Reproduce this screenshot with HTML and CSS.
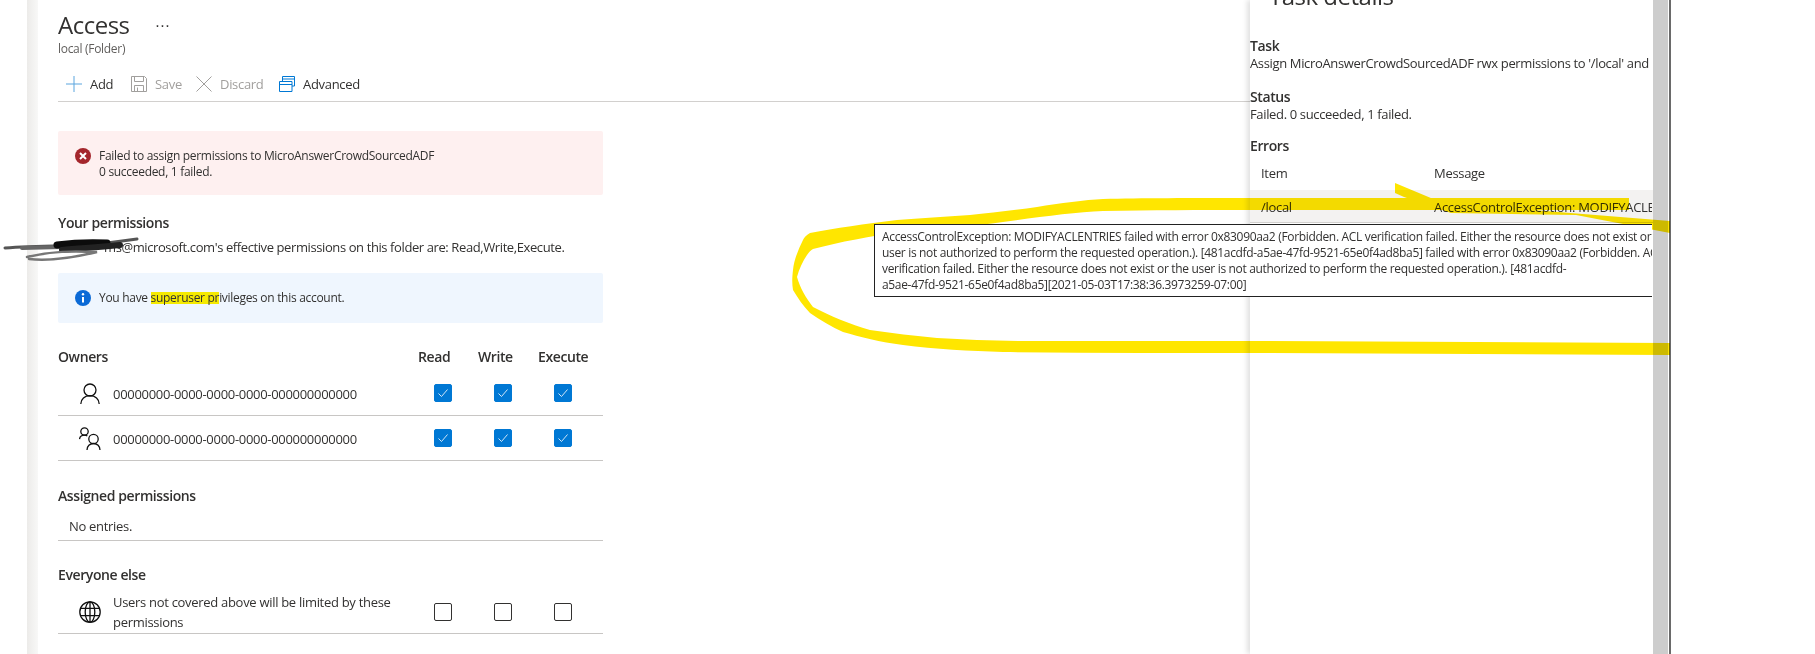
FILE: index.html
```html
<!DOCTYPE html>
<html lang="en">
<head>
  <meta charset="UTF-8" />
  <title>Access</title>
  <link rel="stylesheet" href="styles.css">
</head>
<body>
  <div class="strip"></div>

  <main class="main">
    <div class="title-row">
      <h1>Access</h1>
      <span class="more">&middot;&middot;&middot;</span>
    </div>
    <div class="subtitle">local (Folder)</div>

    <div class="toolbar">
      <button class="tool tool-add">
        <svg viewBox="0 0 16 16" width="16" height="16"><path d="M8 0v16M0 8h16" stroke="#5aa5de" fill="none"/></svg>
        Add
      </button>
      <button class="tool tool-save off">
        <svg viewBox="0 0 16 16" width="16" height="16" fill="none" stroke="#a19f9d"><path d="M.5.5h13l2 2v13H.5zM3.500.5v5h9v-5M3.500 15.500v-6h9v6M6.500 11.500v4"/></svg>
        Save
      </button>
      <button class="tool tool-discard off">
        <svg viewBox="0 0 16 16" width="16" height="16" fill="none" stroke="#a19f9d"><path d="M.5.5l15 15M15.500.5l-15 15"/></svg>
        Discard
      </button>
      <button class="tool tool-advanced">
        <svg viewBox="0 0 16 16" width="16" height="16" fill="none" stroke="#0078d4"><path d="M.5 5.500h12.500v10H.5zM.5 8.500h12.500M3.500 5.500v-5h12v9.500h-2.500M3.500 3h12"/></svg>
        Advanced
      </button>
    </div>

    <div class="content">
      <div class="banner banner-error">
        <svg viewBox="0 0 16 16" width="16" height="16"><circle cx="8" cy="8" r="8" fill="#a4262c"/><path d="M5 5l6 6M11 5l-6 6" stroke="#fff" stroke-width="2"/></svg>
        <div>Failed to assign permissions to MicroAnswerCrowdSourcedADF<br>0 succeeded, 1 failed.</div>
      </div>

      <h2 class="head-yours">Your permissions</h2>
      <div class="effective"><span class="redacted"></span>ms@microsoft.com's effective permissions on this folder are: Read,Write,Execute.</div>

      <div class="banner banner-info">
        <svg viewBox="0 0 16 16" width="16" height="16"><circle cx="8" cy="8" r="8" fill="#0b6ad6"/><path d="M8 7v5.500" stroke="#fff" stroke-width="2"/><circle cx="8" cy="4.300" r="1.200" fill="#fff"/></svg>
        <div>You have <mark>superuser pr</mark>ivileges on this account.</div>
      </div>

      <div class="perm-head">
        <h2>Owners</h2>
        <h2>Read</h2>
        <h2>Write</h2>
        <h2>Execute</h2>
      </div>
      <div class="perm-row">
        <svg class="ico" viewBox="0 0 20 21" width="20" height="21" fill="none" stroke="#111" stroke-width="1.300"><circle cx="10" cy="7" r="6"/><path d="M.8 21c0-5 4-8.300 9.200-8.300s9.200 3.300 9.200 8.300"/></svg>
        <span class="perm-name">00000000-0000-0000-0000-000000000000</span>
        <span class="check on"><svg viewBox="0 0 18 18"><path d="M4.500 9.500l3 3 6-7" fill="none" stroke="#cfe6f8"/></svg></span>
        <span class="check on"><svg viewBox="0 0 18 18"><path d="M4.500 9.500l3 3 6-7" fill="none" stroke="#cfe6f8"/></svg></span>
        <span class="check on"><svg viewBox="0 0 18 18"><path d="M4.500 9.500l3 3 6-7" fill="none" stroke="#cfe6f8"/></svg></span>
      </div>
      <div class="perm-row">
        <svg class="ico" viewBox="0 0 22 23" width="22" height="23" fill="none" stroke="#111" stroke-width="1.300"><circle cx="5.500" cy="4.500" r="3.700"/><path d="M.5 12c.5-2.500 2.500-3.800 5-3.800 1 0 2 .2 2.800.7"/><circle cx="14.500" cy="12" r="4.700"/><path d="M8 23c0-3.800 2.800-6.500 6.500-6.500S21 19.200 21 23"/></svg>
        <span class="perm-name">00000000-0000-0000-0000-000000000000</span>
        <span class="check on"><svg viewBox="0 0 18 18"><path d="M4.500 9.500l3 3 6-7" fill="none" stroke="#cfe6f8"/></svg></span>
        <span class="check on"><svg viewBox="0 0 18 18"><path d="M4.500 9.500l3 3 6-7" fill="none" stroke="#cfe6f8"/></svg></span>
        <span class="check on"><svg viewBox="0 0 18 18"><path d="M4.500 9.500l3 3 6-7" fill="none" stroke="#cfe6f8"/></svg></span>
      </div>

      <h2 class="head-assigned">Assigned permissions</h2>
      <div class="empty-row">No entries.</div>

      <h2 class="head-everyone">Everyone else</h2>
      <div class="perm-row perm-row-tall">
        <svg class="ico" viewBox="0 0 22 22" width="22" height="22" fill="none" stroke="#111" stroke-width="1.300"><circle cx="11" cy="11" r="10.200"/><ellipse cx="11" cy="11" rx="4.800" ry="10.200"/><path d="M11 .8v20.400M1.800 7.300h18.400M1.800 14.700h18.400"/></svg>
        <span>Users not covered above will be limited by these permissions</span>
        <span class="check"></span>
        <span class="check"></span>
        <span class="check"></span>
      </div>
    </div>
  </main>

  <aside class="panel">
    <div class="panel-title">
      <h1>Task details</h1>
      <svg viewBox="0 0 6 6" width="6" height="6"><path d="M.5 5.500l5-5" stroke="#323130" fill="none"/></svg>
    </div>

    <h2 class="panel-first">Task</h2>
    <div class="panel-line">Assign MicroAnswerCrowdSourcedADF rwx permissions to '/local' and its subitems</div>
    <h2 class="panel-head">Status</h2>
    <div class="panel-line">Failed. 0 succeeded, 1 failed.</div>
    <h2 class="panel-head panel-errors">Errors</h2>

    <div class="err-head">
      <span>Item</span>
      <span>Message</span>
    </div>
    <div class="err-row">
      <span>/local</span>
      <span class="err-msg">AccessControlException: MODIFYACLENTRIES failed with error 0x83090aa2</span>
    </div>
  </aside>

  <div class="scrollbar"></div>
  <div class="scroll-rule"></div>

  <!-- pen marks drawn over the screenshot -->
  <svg class="ink" viewBox="0 0 1815 654" width="1815" height="654">
    <path fill="#ffe600" d="M1629 198H1250C1190 198 1140 198 1103 199C1085 200 1060 203 1037 207C1015 210 990 213 970 215C945 217 920 218 897 220C865 224 835 228 810 233C806 235 804 238 803 240C798 250 794 260 793 270C792 278 792 284 793 290C798 298 803 306 810 313C820 320 832 327 843 332C860 337 880 342 903 345C935 349 970 351 1003 352C1090 353 1180 353 1270 353L1670 355V343L1270 341C1180 341 1110 341 1037 341C1000 341 970 340 937 338C915 336 892 333 870 330C850 324 830 316 813 307C806 298 800 288 797 277C799 269 803 261 807 255C809 252 811 250 813 249C840 242 870 236 903 232C940 229 975 226 1003 222C1040 217 1075 212 1103 211C1150 210 1200 210 1250 210H1629Z"/>
    <path fill="#ffe600" d="M1395 183L1450 206L1520 209L1670 221V233L1576 215L1451 213L1404 197L1395 193Z"/>
  </svg>
  <svg class="scribble" viewBox="0 0 140 24" width="140" height="24" fill="none" stroke-linecap="round">
    <path d="M3 11C30 9 60 9 90 8C105 6 120 4 135 2" stroke="#555" stroke-width="3"/>
    <path d="M20 11C50 10 70 10 100 9" stroke="#666" stroke-width="4"/>
    <path d="M55 8C70 6 85 5 105 6" stroke="#0c0c0c" stroke-width="7"/>
    <path d="M60 13C75 11 90 11 118 8" stroke="#222" stroke-width="6"/>
    <path d="M25 20C50 14 70 14 95 15C70 21 45 24 27 22" stroke="#777" stroke-width="2.500"/>
  </svg>

  <div class="tooltip">AccessControlException: MODIFYACLENTRIES failed with error 0x83090aa2 (Forbidden. ACL verification failed. Either the resource does not exist or<br>user is not authorized to perform the requested operation.). [481acdfd-a5ae-47fd-9521-65e0f4ad8ba5] failed with error 0x83090aa2 (Forbidden. ACL<br>verification failed. Either the resource does not exist or the user is not authorized to perform the requested operation.). [481acdfd-<br>a5ae-47fd-9521-65e0f4ad8ba5][2021-05-03T17:38:36.3973259-07:00]</div>
</body>
</html>
```

FILE: styles.css
```css
* { box-sizing: border-box; margin: 0; padding: 0; }

body {
  position: relative;
  display: flex;
  height: 654px;
  padding-left: 27px;
  overflow: hidden;
  background: #fff;
  color: #323130;
  font-family: "Open Sans", "Noto Sans", sans-serif;
  font-size: 12px;
  line-height: 16px;
  letter-spacing: -0.3px;
}

h1 { font-size: 24px; line-height: 32px; font-weight: 400; letter-spacing: -0.5px; }
h2 { font-size: 14px; line-height: 16px; font-weight: 600; letter-spacing: -0.4px; }

.strip {
  flex: none;
  width: 11px;
  background: linear-gradient(to right, #ecebe9, #f8f8f7);
}

/* left blade */
.main {
  flex: none;
  width: 1212px;
  padding: 9px 0 0 20px;
}
.title-row { display: flex; align-items: center; }
.more { margin-left: 26px; font-size: 15px; letter-spacing: 1px; }
.subtitle { color: #605e5c; }

.toolbar {
  display: flex;
  align-items: center;
  height: 45px;
  padding: 10px 0 0 8px;
  border-bottom: 1px solid #d2d0ce;
  font-size: 13px;
}
.tool {
  display: flex;
  align-items: center;
  gap: 8px;
  border: 0;
  background: none;
  color: inherit;
  font: inherit;
  letter-spacing: inherit;
}
.tool-add { width: 65px; }
.tool-save { width: 65px; }
.tool-discard { width: 83px; }
.tool.off { color: #a19f9d; }

.content { width: 545px; }

.banner {
  display: flex;
  align-items: center;
  gap: 8px;
  padding-left: 17px;
  border-radius: 2px;
}
.banner-error {
  align-items: flex-start;
  height: 64px;
  margin-top: 29px;
  padding-top: 17px;
  background: #fef0f0;
}
.banner-info {
  height: 50px;
  margin-top: 18px;
  background: #eff6fe;
}
mark {
  color: inherit;
  background: linear-gradient(#f5ea00, #f5ea00) center / 100% 12px no-repeat;
}

.head-yours { margin-top: 20px; }
.effective { margin-top: 8px; font-size: 13px; letter-spacing: -0.4px; white-space: nowrap; }
.redacted { display: inline-block; width: 46px; }

.perm-head {
  display: grid;
  grid-template-columns: 360px 60px 60px 60px;
  margin-top: 26px;
}
.perm-row {
  display: grid;
  grid-template-columns: 55px 305px 60px 60px 60px;
  align-items: center;
  height: 45px;
  border-bottom: 1px solid #c8c6c4;
  font-size: 13px;
}
.perm-head + .perm-row { margin-top: 6px; }
.perm-name { margin-top: 2px; }
.perm-row-tall {
  height: 42px;
  margin-top: 9px;
  padding-bottom: 2px;
  line-height: 20px;
}
.ico { justify-self: center; margin-left: 8px; }

.check {
  display: block;
  width: 18px;
  height: 18px;
  margin-left: 16px;
  border: 1px solid #323130;
  border-radius: 2px;
}
.check svg { display: block; width: 18px; height: 18px; margin: -1px; }
.check.on { border-color: #0078d4; background: #0078d4; }

.head-assigned { margin-top: 27px; }
.empty-row {
  height: 29px;
  margin-top: 8px;
  padding: 6px 0 0 11px;
  border-bottom: 1px solid #c8c6c4;
  font-size: 13px;
}
.head-everyone { margin-top: 26px; }

/* right blade */
.panel {
  flex: none;
  width: 403px;
  box-shadow: -3px 0 5px rgba(0,0,0,0.12);
  font-size: 13px;
  white-space: nowrap;
}
.panel-title {
  display: flex;
  justify-content: space-between;
  align-items: flex-end;
  height: 32px;
  margin-top: -20px;
  padding: 0 5px 0 19px;
}
.panel-title svg { margin-bottom: 24px; }
.panel-first { margin-top: 26px; }
.panel-head { margin-top: 18px; }
.panel-errors { margin-top: 16px; }
.panel-line { width: 400px; margin-top: 1px; overflow: hidden; letter-spacing: -0.35px; }

.err-head, .err-row {
  display: grid;
  grid-template-columns: 173px 218px;
  padding-left: 11px;
}
.err-head { margin-top: 11px; }
.err-row {
  align-items: center;
  height: 33px;
  margin-top: 9px;
  padding-top: 2px;
  border-bottom: 1px solid #d2d0ce;
  background: #f3f2f1;
}
.err-msg { overflow: hidden; }

.scrollbar { flex: none; width: 15px; background: #cdcdcd; }
.scroll-rule { flex: none; width: 2px; margin-left: 1px; background: #6a6a6a; }

/* overlays */
.ink {
  position: absolute;
  top: 0;
  left: 0;
  mix-blend-mode: multiply;
}
.scribble {
  position: absolute;
  top: 237px;
  left: 2px;
}
.tooltip {
  position: absolute;
  top: 224px;
  left: 874px;
  width: 778px;
  height: 73px;
  padding: 4px 0 0 7px;
  overflow: hidden;
  border: 1px solid #222;
  border-right: 0;
  background: #fff;
  letter-spacing: -0.33px;
  white-space: nowrap;
}
```
